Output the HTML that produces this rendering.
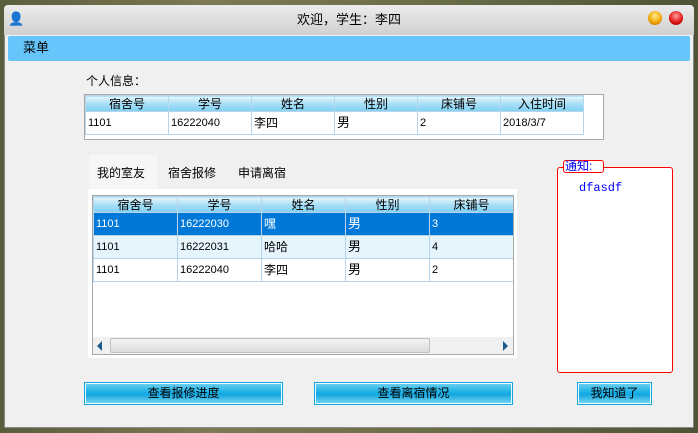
<!DOCTYPE html><html><head><meta charset="utf-8"><style>
*{margin:0;padding:0;box-sizing:border-box}
body{width:698px;height:433px;overflow:hidden;position:relative;background:linear-gradient(90deg,#5a5d3c,#7d7a55 30%,#6b6e48 60%,#4f5436);font-family:"Liberation Sans","Noto Sans CJK SC",sans-serif;font-size:12px;color:#000}
.abs{position:absolute}
.win{left:4px;top:5px;width:690px;height:423px;background:#f0f0f0;border-radius:4px 4px 0 0;border:1px solid #888}
.title{left:4px;top:5px;width:690px;height:30px;background:linear-gradient(#ececec,#d0d0d0);border-radius:4px 4px 0 0}
table{border-collapse:collapse;table-layout:fixed}
td,th{border:1px solid #b8d4ec;padding:0 0 0 2px;font-weight:normal;white-space:nowrap;overflow:hidden;font-size:11px;line-height:14px}
td{height:23px}
th{height:16px;background:linear-gradient(#e8f6fd,#a8def6 50%,#7fd0f2);text-align:center;font-size:12px;padding:0;line-height:14px}
.btn{border:1px solid #16a7e0;background:linear-gradient(#6fd1f0,#19b0e6 45%,#12a6df 55%,#7ed8f5);box-shadow:inset 0 0 0 1px #e8f8ff;text-align:center;line-height:20px;font-size:12px}
.circ{width:14px;height:14px;border-radius:50%;top:11px}
</style></head><body>
<div class="abs win"></div>
<div class="abs title"></div>
<div class="abs" style="left:8px;top:11px;font-size:13px">👤</div>
<div class="abs" style="left:0;width:698px;top:9px;text-align:center;font-size:13px">欢迎，学生：李四</div>
<div class="abs circ" style="left:648px;background:radial-gradient(circle at 50% 35%,#ffee88,#f0a000 60%,#a05000)"></div>
<div class="abs circ" style="left:669px;background:radial-gradient(circle at 50% 35%,#ff9c9c,#e01010 60%,#800000)"></div>
<div class="abs" style="left:8px;top:36px;width:682px;height:25px;background:#66c6fc;border-radius:2px"></div>
<div class="abs" style="left:23px;top:40px;font-size:13px;line-height:16px">菜单</div>
<div class="abs" style="left:86px;top:72px;font-size:12px">个人信息：</div>
<div class="abs" style="left:84px;top:94px;width:520px;height:46px;border:1px solid #a8a8a8;background:#fff">
<table style="width:499px"><tr><th>宿舍号</th><th>学号</th><th>姓名</th><th>性别</th><th>床铺号</th><th>入住时间</th></tr>
<tr><td>1101</td><td>16222040</td><td style="font-size:12px">李四</td><td style="font-size:13px">男</td><td>2</td><td>2018/3/7</td></tr></table></div>
<div class="abs" style="left:89px;top:155px;width:68px;height:34px;background:#f6f6f6"></div>
<div class="abs" style="left:97px;top:164px;font-size:12px">我的室友</div>
<div class="abs" style="left:168px;top:164px;font-size:12px">宿舍报修</div>
<div class="abs" style="left:238px;top:164px;font-size:12px">申请离宿</div>
<div class="abs" style="left:88px;top:189px;width:429px;height:169px;background:#fff"></div>
<div class="abs" style="left:92px;top:195px;width:422px;height:160px;border:1px solid #a8a8a8;background:#fff;overflow:hidden">
<table style="width:421px"><tr><th>宿舍号</th><th>学号</th><th>姓名</th><th>性别</th><th>床铺号</th></tr>
<tr style="background:#0078d7;color:#fff"><td>1101</td><td>16222030</td><td style="font-size:12px">嘿</td><td style="font-size:13px">男</td><td>3</td></tr>
<tr style="background:#e6f4fc"><td>1101</td><td>16222031</td><td style="font-size:12px">哈哈</td><td style="font-size:13px">男</td><td>4</td></tr>
<tr><td>1101</td><td>16222040</td><td style="font-size:12px">李四</td><td style="font-size:13px">男</td><td>2</td></tr></table>
<div class="abs" style="left:0;top:141px;width:420px;height:17px;background:#f0f0f0"></div>
<div class="abs" style="left:17px;top:142px;width:320px;height:15px;border:1px solid #c0c0c0;background:linear-gradient(#f4f4f4,#dcdcdc);border-radius:2px"></div>
<div class="abs" style="left:4px;top:145px;width:0;height:0;border:5px solid transparent;border-right:5px solid #1d5d8e;border-left:0"></div>
<div class="abs" style="left:410px;top:145px;width:0;height:0;border:5px solid transparent;border-left:5px solid #1d5d8e;border-right:0"></div>
</div>
<div class="abs" style="left:557px;top:167px;width:116px;height:206px;border:1px solid #f00;border-radius:3px;background:#fff"></div>
<div class="abs" style="left:563px;top:160px;width:41px;height:13px;border:1px solid #f00;border-radius:3px;background:#fff;color:#00f;font-size:12px;line-height:11px;padding-left:1px">通知:</div>
<div class="abs" style="left:579px;top:181px;color:#00f;font-family:'Liberation Mono',monospace;font-size:12px">dfasdf</div>
<div class="abs btn" style="left:84px;top:382px;width:199px;height:23px">查看报修进度</div>
<div class="abs btn" style="left:314px;top:382px;width:199px;height:23px">查看离宿情况</div>
<div class="abs btn" style="left:577px;top:382px;width:75px;height:23px">我知道了</div>
</body></html>
